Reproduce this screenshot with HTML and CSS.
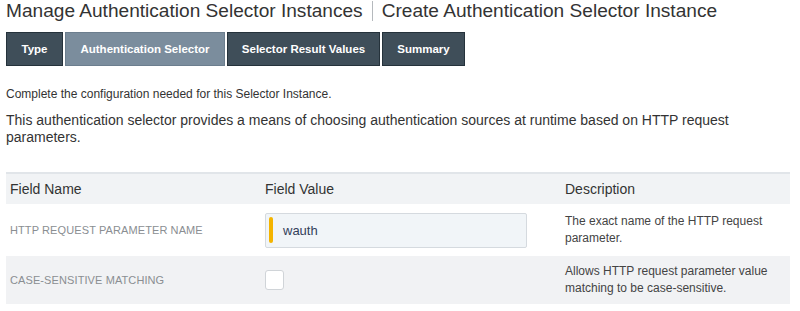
FILE: index.html
```html
<!DOCTYPE html>
<html>
<head>
<meta charset="utf-8">
<link rel="stylesheet" href="styles.css">
</head>
<body>
<div class="page">
  <h1 class="title">Manage Authentication Selector Instances<span class="sep"></span>Create Authentication Selector Instance</h1>
  <div class="tabs">
    <div class="tab t1">Type</div>
    <div class="tab t2 active">Authentication Selector</div>
    <div class="tab t3">Selector Result Values</div>
    <div class="tab t4">Summary</div>
  </div>
  <p class="hint">Complete the configuration needed for this Selector Instance.</p>
  <p class="desc">This authentication selector provides a means of choosing authentication sources at runtime based on HTTP request parameters.</p>
  <div class="table">
    <div class="row head">
      <div class="c1">Field Name</div>
      <div class="c2">Field Value</div>
      <div class="c3">Description</div>
    </div>
    <div class="row r1">
      <div class="c1 name">HTTP REQUEST PARAMETER NAME</div>
      <div class="c2"><div class="input"><span class="req"></span><span class="val">wauth</span></div></div>
      <div class="c3 help">The exact name of the HTTP request parameter.</div>
    </div>
    <div class="row r2">
      <div class="c1 name">CASE-SENSITIVE MATCHING</div>
      <div class="c2"><div class="check"></div></div>
      <div class="c3 help">Allows HTTP request parameter value matching to be case-sensitive.</div>
    </div>
  </div>
</div>
</body>
</html>
```
FILE: styles.css
```css
* { box-sizing: border-box; }
html, body { margin: 0; padding: 0; background: #fff; }
body { font-family: "Liberation Sans", Arial, sans-serif; color: #333; }
.page { padding: 0 10px 0 6px; }
.title {
  margin: 0;
  font-weight: normal;
  font-size: 19.1px;
  line-height: 22px;
  color: #333;
  display: flex;
  align-items: center;
  height: 22px;
}
.sep {
  display: inline-block;
  width: 1px;
  height: 20px;
  background: #b5b9bd;
  margin: 0 9px 0 9px;
}
.tabs { display: flex; gap: 2px; margin-top: 10px; height: 34px; }
.tab {
  background: #3f4e59;
  border: 1px solid #25323b;
  color: #fff;
  font-weight: bold;
  font-size: 11.5px;
  display: flex;
  align-items: center;
  justify-content: center;
}
.tab.active { background: #7b8d9d; border-color: #6c7e8e; }
.t1 { width: 57px; }
.t2 { width: 160px; }
.t3 { width: 153px; }
.t4 { width: 83px; }
.hint { margin: 21px 0 0; font-size: 12px; line-height: 15px; color: #333; }
.desc { margin: 10px 0 0; font-size: 14px; line-height: 17px; color: #333; width: 740px; }
.table { margin-top: 26px; width: 784px; border-top: 2px solid #e1e5e9; }
.row { display: flex; align-items: center; }
.head { background: #f1f3f5; height: 30px; font-size: 14px; color: #333; }
.r1 { background: #fff; height: 52px; }
.r2 { background: #f1f2f4; height: 48px; }
.c1 { width: 259px; padding-left: 4px; }
.c2 { width: 300px; }
.c3 { flex: 1; padding-left: 0; }
.name { font-size: 11px; color: #8a8e92; letter-spacing: 0.1px; }
.help { font-size: 12px; line-height: 17px; color: #444; width: 210px; flex: none; }
.input {
  width: 262px;
  height: 35px;
  border: 1px solid #d5dadf;
  border-radius: 2px;
  background: #f1f5f8;
  display: flex;
  align-items: center;
  padding-left: 3px;
}
.req { width: 4px; height: 26px; background: #f4b400; border-radius: 2px; }
.val { margin-left: 10px; font-size: 13px; color: #33405a; }
.check {
  width: 19px;
  height: 20px;
  border: 1px solid #d0d4d8;
  border-radius: 3px;
  background: #fff;
}
```
